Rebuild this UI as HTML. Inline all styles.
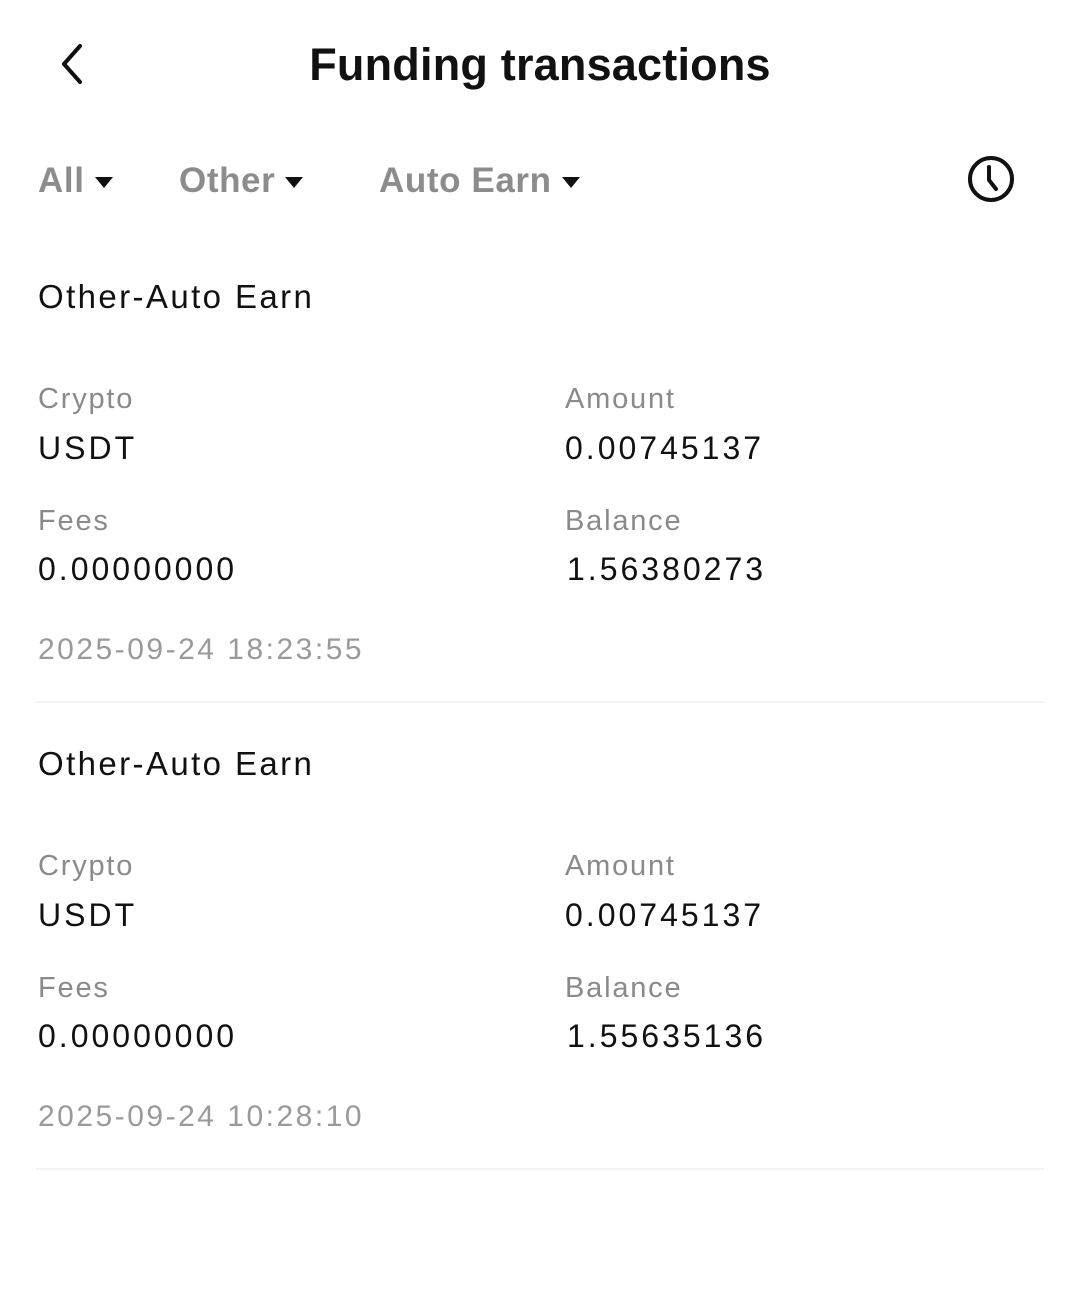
<!DOCTYPE html>
<html><head><meta charset="utf-8"><style>
body{margin:0;width:1080px;height:1303px;background:#fff;position:relative;overflow:hidden;font-family:"Liberation Sans",sans-serif;}
.t{position:absolute;white-space:nowrap;line-height:40px;height:40px;}
.title{left:0;width:1080px;text-align:center;top:45px;font-size:45px;font-weight:bold;color:#111;letter-spacing:0.2px;}
.f{font-size:35px;font-weight:bold;color:#8c8c8c;top:161px;letter-spacing:0.6px;}
.f span{display:inline-block;width:0;height:0;border-left:9px solid transparent;border-right:9px solid transparent;border-top:11px solid #111;margin-left:10px;vertical-align:middle;}
.h{font-size:33px;color:#111;left:38px;letter-spacing:2.4px;}
.l{font-size:29px;color:#8a8a8a;letter-spacing:1.8px;}
.v{font-size:32px;color:#111;letter-spacing:3px;}
.d{font-size:30px;color:#9a9a9a;left:38px;letter-spacing:2.5px;}
.line{position:absolute;left:36px;right:36px;height:2px;background:#f3f3f3;}
</style></head><body>
<svg style="position:absolute;left:56px;top:42px" width="32" height="44" viewBox="0 0 32 44"><path d="M24 4 L8 22 L24 40" fill="none" stroke="#111" stroke-width="4" stroke-linecap="round" stroke-linejoin="round"/></svg>
<div class="t title">Funding transactions</div>
<div class="t f" style="left:38px">All<span></span></div>
<div class="t f" style="left:179px">Other<span></span></div>
<div class="t f" style="left:379px">Auto Earn<span></span></div>
<svg style="position:absolute;left:966px;top:155px" width="50" height="50" viewBox="0 0 50 50"><circle cx="25" cy="24" r="21" fill="none" stroke="#111" stroke-width="4"/><path d="M23 12 V25 L30 34" fill="none" stroke="#111" stroke-width="4" stroke-linecap="round" stroke-linejoin="round"/></svg>

<div class="t h" style="top:277px">Other-Auto Earn</div>
<div class="t l" style="left:38px;top:379px">Crypto</div>
<div class="t l" style="left:565px;top:379px">Amount</div>
<div class="t v" style="left:38px;top:428px">USDT</div>
<div class="t v" style="left:565px;top:428px">0.00745137</div>
<div class="t l" style="left:38px;top:501px">Fees</div>
<div class="t l" style="left:565px;top:501px">Balance</div>
<div class="t v" style="left:38px;top:549px">0.00000000</div>
<div class="t v" style="left:567px;top:549px">1.56380273</div>
<div class="t d" style="top:630px">2025-09-24 18:23:55</div>
<div class="line" style="top:701px"></div>

<div class="t h" style="top:744px">Other-Auto Earn</div>
<div class="t l" style="left:38px;top:846px">Crypto</div>
<div class="t l" style="left:565px;top:846px">Amount</div>
<div class="t v" style="left:38px;top:895px">USDT</div>
<div class="t v" style="left:565px;top:895px">0.00745137</div>
<div class="t l" style="left:38px;top:968px">Fees</div>
<div class="t l" style="left:565px;top:968px">Balance</div>
<div class="t v" style="left:38px;top:1016px">0.00000000</div>
<div class="t v" style="left:567px;top:1016px">1.55635136</div>
<div class="t d" style="top:1097px">2025-09-24 10:28:10</div>
<div class="line" style="top:1168px"></div>
</body></html>
